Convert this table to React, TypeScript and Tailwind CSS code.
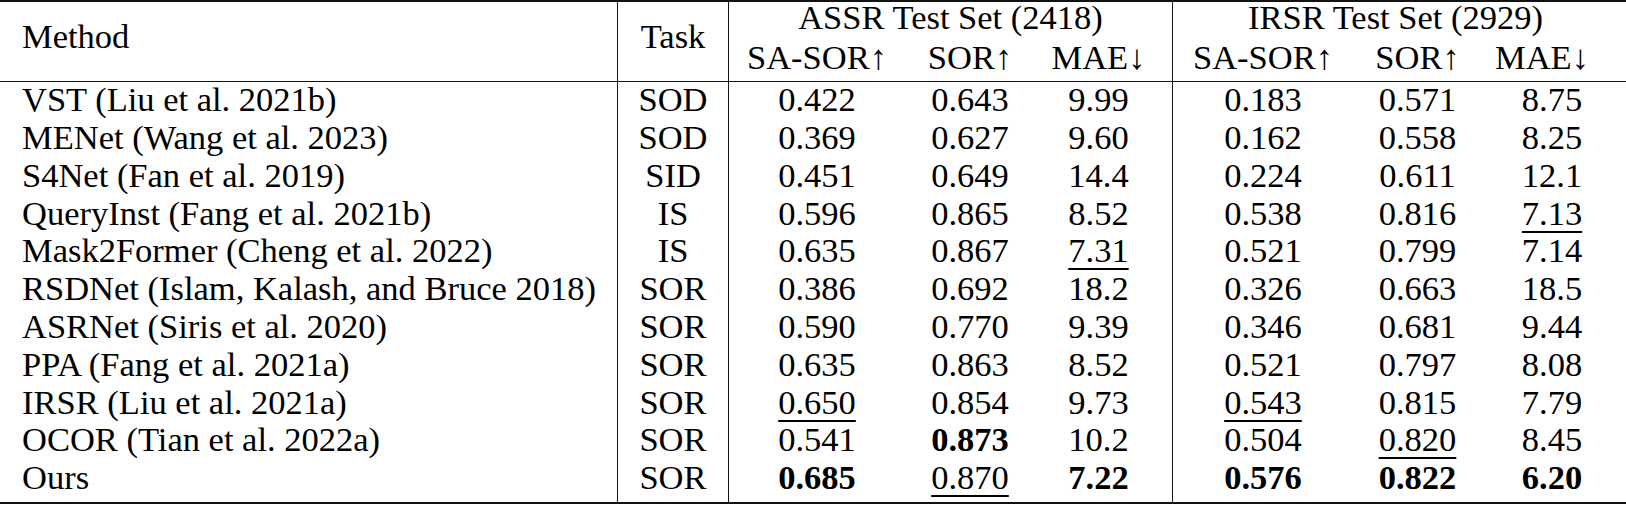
import React from "react";

type Cell = string;

const rows: Cell[][] = [
  ["VST (Liu et al. 2021b)", "SOD", "0.422", "0.643", "9.99", "0.183", "0.571", "8.75"],
  ["MENet (Wang et al. 2023)", "SOD", "0.369", "0.627", "9.60", "0.162", "0.558", "8.25"],
  ["S4Net (Fan et al. 2019)", "SID", "0.451", "0.649", "14.4", "0.224", "0.611", "12.1"],
  ["QueryInst (Fang et al. 2021b)", "IS", "0.596", "0.865", "8.52", "0.538", "0.816", "7.13|u"],
  ["Mask2Former (Cheng et al. 2022)", "IS", "0.635", "0.867", "7.31|u", "0.521", "0.799", "7.14"],
  ["RSDNet (Islam, Kalash, and Bruce 2018)", "SOR", "0.386", "0.692", "18.2", "0.326", "0.663", "18.5"],
  ["ASRNet (Siris et al. 2020)", "SOR", "0.590", "0.770", "9.39", "0.346", "0.681", "9.44"],
  ["PPA (Fang et al. 2021a)", "SOR", "0.635", "0.863", "8.52", "0.521", "0.797", "8.08"],
  ["IRSR (Liu et al. 2021a)", "SOR", "0.650|u", "0.854", "9.73", "0.543|u", "0.815", "7.79"],
  ["OCOR (Tian et al. 2022a)", "SOR", "0.541", "0.873|b", "10.2", "0.504", "0.820|u", "8.45"],
  ["Ours", "SOR", "0.685|b", "0.870|u", "7.22|b", "0.576|b", "0.822|b", "6.20|b"],
];

const F = "font-['Liberation_Serif'] text-[34.5px] leading-none text-black";

function Val({ v }: { v: string }) {
  if (v.endsWith("|u")) {
    return (
      <span className={F + " underline decoration-[1.5px] underline-offset-[6px]"}>{v.slice(0, -2)}</span>
    );
  }
  if (v.endsWith("|b")) {
    return <span className={F + " font-bold"}>{v.slice(0, -2)}</span>;
  }
  return <span className={F}>{v}</span>;
}

const colCls = [
  "justify-start pl-[22px]",
  "justify-center border-l border-[#111]",
  "justify-center border-l border-[#111]",
  "justify-center",
  "justify-center pr-[10px]",
  "justify-center border-l border-[#111]",
  "justify-center",
  "justify-center pr-[4px]",
];

function H({ cls, children }: { cls: string; children: React.ReactNode }) {
  return (
    <div className={"flex items-center " + cls}>
      <span className={F + " whitespace-nowrap"}>{children}</span>
    </div>
  );
}

export default function App() {
  return (
    <div className="w-[1626px] h-[505px] bg-white">
      <div className="grid grid-cols-[617px_111px_177px_130px_137px_181px_129px_144px] grid-rows-[2px_34px_45px_1px_repeat(11,37.8px)_4px_2px]">
        <div className="col-span-8 bg-[#111]" />

        <H cls="row-span-2 pl-[22px] pb-[10px]">Method</H>
        <H cls="row-span-2 justify-center border-l border-[#111] pb-[10px]">Task</H>
        <H cls="col-span-3 justify-center border-l border-[#111] pb-[3px]">ASSR Test Set (2418)</H>
        <H cls="col-span-3 justify-center border-l border-[#111] pb-[3px] pr-[8px]">IRSR Test Set (2929)</H>

        <H cls="justify-center border-l border-[#111] pb-[3px]">SA-SOR↑</H>
        <H cls="justify-center pb-[3px]">SOR↑</H>
        <H cls="justify-center pb-[3px] pr-[10px]">MAE↓</H>
        <H cls="justify-center border-l border-[#111] pb-[3px]">SA-SOR↑</H>
        <H cls="justify-center pb-[3px]">SOR↑</H>
        <H cls="justify-center pb-[3px] pr-[24px]">MAE↓</H>

        <div className="col-span-8 bg-[#111]" />

        {rows.map((r, i) => (
          <React.Fragment key={i}>
            {r.map((c, j) => (
              <div key={j} className={"flex items-center whitespace-nowrap pb-[3px] " + colCls[j]}>
                {j < 2 ? <span className={F}>{c}</span> : <Val v={c} />}
              </div>
            ))}
          </React.Fragment>
        ))}

        <div />
        <div className="border-l border-[#111]" />
        <div className="border-l border-[#111]" />
        <div />
        <div />
        <div className="border-l border-[#111]" />
        <div />
        <div />

        <div className="col-span-8 bg-[#111]" />
      </div>
    </div>
  );
}
